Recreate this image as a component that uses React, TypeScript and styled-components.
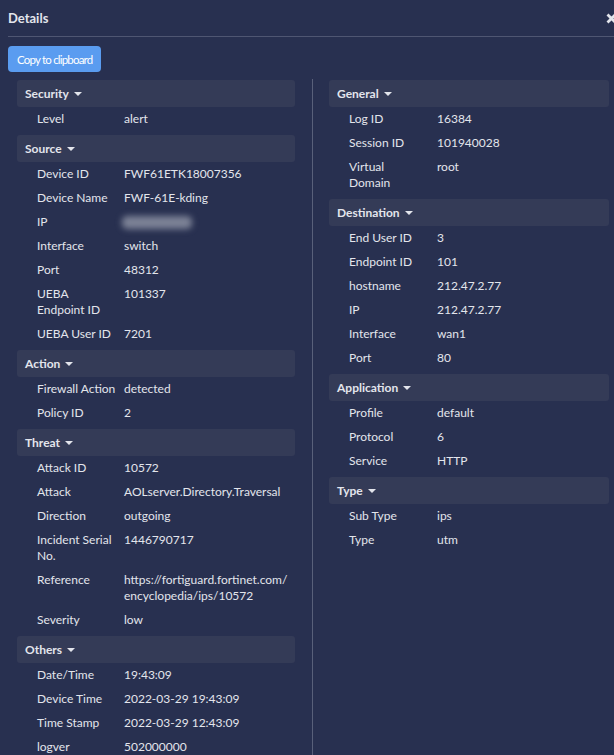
import styled, { createGlobalStyle } from 'styled-components'

const Global = createGlobalStyle`
  html, body {
    margin: 0;
    padding: 0;
    background: #283050;
    overflow: hidden;
  }
  body {
    font-family: Lato, "Open Sans", sans-serif;
    color: #e3e5ec;
    font-size: 12px;
  }
`

const Panel = styled.div`
  width: 614px;
  height: 755px;
  background: #283050;
  overflow: hidden;
`

const TitleBar = styled.div`
  display: flex;
  align-items: center;
  justify-content: space-between;
  height: 36px;
  margin-left: 8px;
  border-bottom: 1px solid #4f5672;
`

const Title = styled.div`
  font-weight: 700;
  font-size: 13px;
`

const Close = styled.div`
  width: 11px;
  height: 11px;
  margin-right: -3px;
  display: flex;
`

const CopyBtn = styled.button`
  margin: 9px 0 0 8px;
  height: 26px;
  padding: 0 9px;
  border: none;
  border-radius: 4px;
  background: #5a9cf0;
  color: #fff;
  font-family: Lato, sans-serif;
  font-size: 11.5px;
  letter-spacing: -0.8px;
`

const Columns = styled.div`
  display: flex;
  margin-top: 7px;
`

const Column = styled.div<{ $left?: boolean }>`
  width: ${p => (p.$left ? '278px' : '280px')};
  margin-left: ${p => (p.$left ? '17px' : '16px')};
  padding-right: ${p => (p.$left ? '17px' : '0')};
  border-right: ${p => (p.$left ? '1px solid #59607a' : 'none')};
  padding-top: 1px;
  min-height: 700px;
`

const Header = styled.div`
  display: flex;
  align-items: center;
  gap: 5px;
  height: 27px;
  padding-left: 8px;
  background: #343b57;
  border-radius: 3px;
  font-weight: 700;
`

const Caret = styled.span`
  width: 0;
  height: 0;
  border-left: 4px solid transparent;
  border-right: 4px solid transparent;
  border-top: 4px solid #e3e5ec;
  margin-top: 1px;
`

const Section = styled.div`
  margin-bottom: 4px;
`

const Row = styled.div<{ $labelW: number; $gap: number }>`
  display: grid;
  grid-template-columns: ${p => p.$labelW}px 1fr;
  column-gap: ${p => p.$gap}px;
  padding: 4px 0 4px 20px;
  line-height: 16px;
`

const Label = styled.div``

const Value = styled.div``

const Blur = styled.div`
  width: 70px;
  height: 13px;
  margin: 2px 0 0 -2px;
  background: #7c8296;
  border-radius: 5px;
  filter: blur(3px);
`

type Item = [string, string]

const left: [string, Item[]][] = [
  ['Security', [['Level', 'alert']]],
  ['Source', [
    ['Device ID', 'FWF61ETK18007356'],
    ['Device Name', 'FWF-61E-kding'],
    ['IP', '__blur__'],
    ['Interface', 'switch'],
    ['Port', '48312'],
    ['UEBA Endpoint ID', '101337'],
    ['UEBA User ID', '7201'],
  ]],
  ['Action', [['Firewall Action', 'detected'], ['Policy ID', '2']]],
  ['Threat', [
    ['Attack ID', '10572'],
    ['Attack', 'AOLserver.Directory.Traversal'],
    ['Direction', 'outgoing'],
    ['Incident Serial No.', '1446790717'],
    ['Reference', 'https://fortiguard.fortinet.com/\u200Bencyclopedia/ips/10572'],
    ['Severity', 'low'],
  ]],
  ['Others', [
    ['Date/Time', '19:43:09'],
    ['Device Time', '2022-03-29 19:43:09'],
    ['Time Stamp', '2022-03-29 12:43:09'],
    ['logver', '502000000'],
  ]],
]

const right: [string, Item[]][] = [
  ['General', [['Log ID', '16384'], ['Session ID', '101940028'], ['Virtual Domain', 'root']]],
  ['Destination', [
    ['End User ID', '3'],
    ['Endpoint ID', '101'],
    ['hostname', '212.47.2.77'],
    ['IP', '212.47.2.77'],
    ['Interface', 'wan1'],
    ['Port', '80'],
  ]],
  ['Application', [['Profile', 'default'], ['Protocol', '6'], ['Service', 'HTTP']]],
  ['Type', [['Sub Type', 'ips'], ['Type', 'utm']]],
]

function Sections({ data, labelW, gap }: { data: [string, Item[]][]; labelW: number; gap: number }) {
  return (
    <>
      {data.map(([name, items]) => (
        <Section key={name}>
          <Header>{name}<Caret /></Header>
          {items.map(([k, v]) => (
            <Row key={k} $labelW={labelW} $gap={gap}>
              <Label>{k}</Label>
              {v === '__blur__' ? <Blur /> : <Value>{v}</Value>}
            </Row>
          ))}
        </Section>
      ))}
    </>
  )
}

export default function App() {
  return (
    <Panel>
      <Global />
      <TitleBar>
        <Title>Details</Title>
        <Close>
          <svg width="11" height="11" viewBox="0 0 11 11">
            <path d="M1.5 1.5L9.5 9.5M9.5 1.5L1.5 9.5" stroke="#e3e5ec" strokeWidth="2.8" />
          </svg>
        </Close>
      </TitleBar>
      <CopyBtn>Copy to clipboard</CopyBtn>
      <Columns>
        <Column $left><Sections data={left} labelW={80} gap={7} /></Column>
        <Column><Sections data={right} labelW={75} gap={13} /></Column>
      </Columns>
    </Panel>
  )
}
